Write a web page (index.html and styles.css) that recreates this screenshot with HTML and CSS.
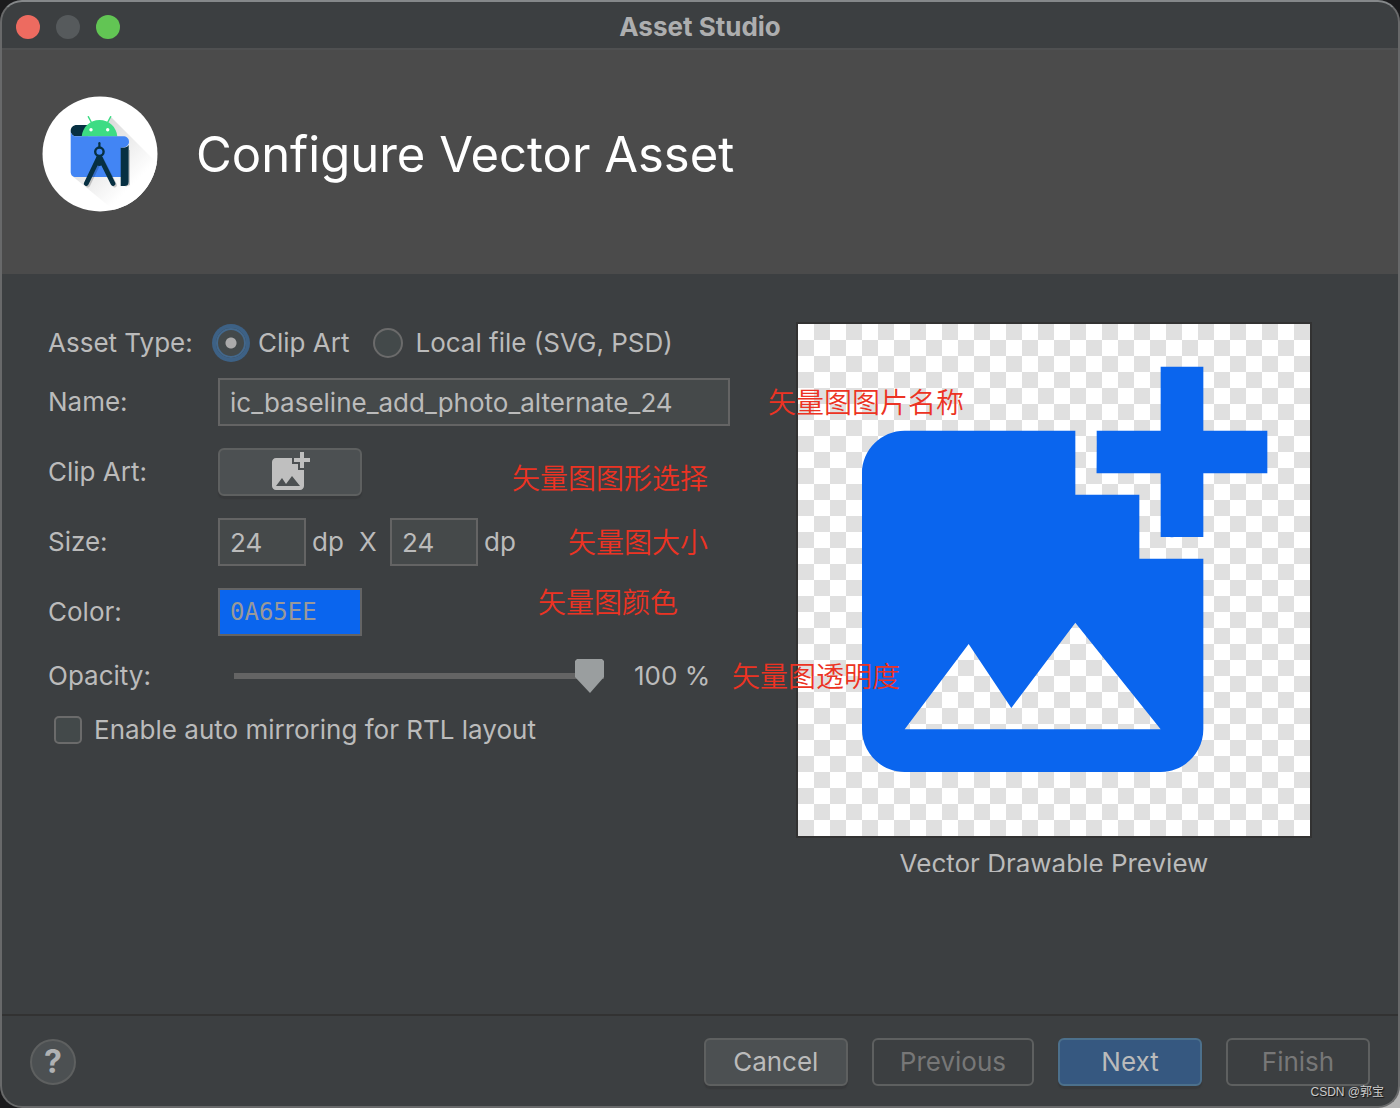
FILE: index.html
```html
<!DOCTYPE html>
<html lang="en">
<head>
  <meta charset="UTF-8" />
  <title>Asset Studio</title>
  <link rel="stylesheet" href="styles.css">
</head>
<body>
<div class="window">
  <div class="titlebar">
    <div class="lights">
      <span class="light close"></span>
      <span class="light minimize"></span>
      <span class="light zoom"></span>
    </div>
    <div class="window-title">Asset Studio</div>
  </div>

  <header class="header">
    <svg class="logo" viewBox="0 0 116 116" aria-hidden="true">
      <defs>
        <clipPath id="disc"><circle cx="58" cy="58" r="57.5"/></clipPath>
        <linearGradient id="shade" gradientUnits="userSpaceOnUse" x1="46" y1="46" x2="90" y2="90">
          <stop offset="0" stop-color="#dcdcdc"/>
          <stop offset="1" stop-color="#fff"/>
        </linearGradient>
      </defs>
      <circle cx="58" cy="58" r="57.5" fill="#fff"/>
      <path d="M69 21l60 60-44 44-56-46z" fill="url(#shade)" clip-path="url(#disc)"/>
      <path d="M46 29H35c-4 0-6.300 2.500-6.300 5.700 0 3.500 2.300 5.600 5.600 5.600H46z" fill="#073042"/>
      <path d="M39.700 40.500C40.500 31 48 24 57.500 24s17 7 17.800 16.500z" fill="#3ddc84"/>
      <path d="M46.300 20.700l3.200 6M68.700 20.700l-3.200 6" stroke="#3ddc84" stroke-width="1.400" stroke-linecap="round"/>
      <circle cx="49" cy="33.700" r="1.700" fill="#fff"/>
      <circle cx="65.700" cy="33.700" r="1.700" fill="#fff"/>
      <path d="M87 54v33l-4 4 5-2V54z" fill="#000" opacity=".2"/>
      <path d="M28.700 34.500v41.500c0 3 2.300 5 5 5H79V51.700c5.500 0 8-2.700 8-6 0-3.500-2.500-5.400-6-5.400H34.300c-3.300 0-5.600-2.300-5.600-5.800z" fill="#4285f4"/>
      <path d="M78.700 51.700h2.300c2.500 0 4.700-1 5.700-2.700v37c0 2.500-1.500 4-4 4h-4z" fill="#073042"/>
      <g transform="translate(1.500 1.500)" stroke="#000" stroke-width="4.800" stroke-linecap="round" opacity=".18">
        <path d="M56.500 62L44.300 87.500M58 62l13 25.500"/>
      </g>
      <g stroke="#073042" fill="none" stroke-linecap="round">
        <path d="M57.400 47.200v4" stroke-width="2.200"/>
        <circle cx="57.400" cy="55.700" r="4.200" stroke-width="2.400"/>
        <path d="M56.500 62L44.300 87.500M58.300 62L71 87.500" stroke-width="4.800"/>
        <path d="M57.400 62v5" stroke-width="6"/>
      </g>
    </svg>
    <h1>Configure Vector Asset</h1>
  </header>

  <main class="content">
    <form class="form" id="asset-form">
      <div class="row type-row">
        <span class="label">Asset Type:</span>
        <div class="radios">
          <label><input type="radio" name="type" checked>Clip Art</label>
          <label><input type="radio" name="type">Local file (SVG, PSD)</label>
        </div>
      </div>
      <div class="row">
        <label class="label" for="name">Name:</label>
        <input class="field name" type="text" id="name" value="ic_baseline_add_photo_alternate_24">
        <span class="note note-name">矢量图图片名称</span>
      </div>
      <div class="row">
        <label class="label" for="clip">Clip Art:</label>
        <button class="btn clip" type="button" id="clip" aria-label="Choose clip art">
          <svg viewBox="0 0 24 24"><path d="M19 7v2.990s-1.990.010-2 0V7h-3s.010-1.990 0-2h3V2h2v3h3v2h-3zm-3 4V8h-3V5H5c-1.100 0-2 .900-2 2v12c0 1.100.900 2 2 2h12c1.100 0 2-.900 2-2v-8h-3zM5 19l3-4 2 3 3-4 4 5H5z"/></svg>
        </button>
        <span class="note note-clip">矢量图图形选择</span>
      </div>
      <div class="row">
        <label class="label" for="width">Size:</label>
        <input class="field size" type="text" id="width" value="24">
        <span class="unit">dp</span>
        <label class="times" for="height">X</label>
        <input class="field size" type="text" id="height" value="24">
        <span class="unit">dp</span>
        <span class="note note-size">矢量图大小</span>
      </div>
      <div class="row">
        <label class="label" for="color">Color:</label>
        <input class="field color" type="text" id="color" value="0A65EE">
        <span class="note note-color">矢量图颜色</span>
      </div>
      <div class="row opacity-row">
        <label class="label" for="opacity">Opacity:</label>
        <input class="slider" type="range" id="opacity" min="0" max="100" value="100">
        <output for="opacity">100 %</output>
        <span class="note note-opacity">矢量图透明度</span>
      </div>
      <label class="mirror"><input type="checkbox">Enable auto mirroring for RTL layout</label>
    </form>

    <figure class="preview">
      <div class="checker">
        <svg viewBox="0 0 24 24"><path d="M19 7v2.990s-1.990.010-2 0V7h-3s.010-1.990 0-2h3V2h2v3h3v2h-3zm-3 4V8h-3V5H5c-1.100 0-2 .900-2 2v12c0 1.100.900 2 2 2h12c1.100 0 2-.900 2-2v-8h-3zM5 19l3-4 2 3 3-4 4 5H5z"/></svg>
      </div>
      <figcaption>Vector Drawable Preview</figcaption>
    </figure>
  </main>

  <footer class="footer">
    <button class="help" type="button">?</button>
    <div class="actions">
      <button class="btn" type="button">Cancel</button>
      <button class="btn previous" type="button" disabled>Previous</button>
      <button class="btn primary" type="submit" form="asset-form">Next</button>
      <button class="btn" type="button" disabled>Finish</button>
    </div>
  </footer>
  <div class="watermark">CSDN @郭宝</div>
</div>
</body>
</html>
```
FILE: styles.css
```css
* {
  box-sizing: border-box;
}
body {
  margin: 0;
  background: linear-gradient(135deg, #1b1b1d 98%, #b4b4b4 99%);
  color: #bbb;
  font-family: Inter, "Noto Sans CJK SC", sans-serif;
  font-size: 26px;
  line-height: 32px;
}
input, button {
  font: inherit;
  color: inherit;
  margin: 0;
}
.window {
  position: relative;
  display: flex;
  flex-direction: column;
  min-height: 100vh;
  border: 2px solid #68696a;
  border-top-color: #85888a;
  border-radius: 22px;
  background: #3c3f41;
  overflow: hidden;
}

/* title bar */
.titlebar {
  display: grid;
  grid-template-columns: 1fr auto 1fr;
  align-items: center;
  height: 48px;
  padding: 4px 14px 0;
  border-bottom: 2px solid #4f5051;
}
.lights {
  display: flex;
  gap: 16px;
}
.light {
  width: 24px;
  height: 24px;
  border-radius: 50%;
}
.close { background: #ed6b60; }
.minimize { background: #565a5c; }
.zoom { background: #62c554; }
.window-title {
  font-weight: bold;
  color: #adaeaf;
}

/* header */
.header {
  display: flex;
  align-items: flex-start;
  gap: 38px;
  height: 224px;
  padding: 46px 40px 0;
  background: #4b4b4b;
}
.logo {
  width: 116px;
  height: 116px;
}
h1 {
  margin: 0;
  font-size: 49px;
  font-weight: normal;
  line-height: 118px;
  color: #fff;
}

/* form */
.content {
  flex: 1;
  display: flex;
  justify-content: space-between;
  align-items: flex-start;
  padding: 48px 86px 48px 46px;
}
.row {
  position: relative;
  display: flex;
  align-items: center;
  height: 48px;
  margin-bottom: 22px;
}
.type-row {
  height: 42px;
  margin-bottom: 14px;
}
.type-row .label {
  width: 168px;
}
.opacity-row {
  height: 36px;
}
.label {
  width: 170px;
}
.radios {
  display: flex;
  gap: 24px;
}
.radios label, .mirror {
  display: flex;
  align-items: center;
  gap: 12px;
}
input[type="radio"], input[type="checkbox"] {
  appearance: none;
  width: 30px;
  height: 30px;
  border: 2px solid #6b6b6b;
  border-radius: 50%;
  background: #43494a;
}
input[type="radio"]:checked {
  border-color: #43688c;
  background: radial-gradient(circle, #ababab 5px, #43494a 6px);
  box-shadow: 0 0 0 4px #3d6185;
}
.mirror {
  height: 28px;
  padding-left: 6px;
}
input[type="checkbox"] {
  width: 28px;
  height: 28px;
  border-radius: 5px;
}
.field {
  height: 48px;
  padding: 0 10px;
  border: 2px solid #646464;
  border-radius: 0;
  background: #45494a;
}
.name { width: 512px; }
.size { width: 88px; }
.unit {
  width: 32px;
  margin-left: 6px;
}
.times {
  width: 18px;
  margin: 0 13px 0 15px;
}
.color {
  width: 144px;
  background: #0a65ee;
  color: #999;
  font-family: "DejaVu Sans Mono", monospace;
  font-size: 24px;
}
.slider {
  appearance: none;
  width: 370px;
  height: 34px;
  margin: 0 30px 0 16px;
  background: linear-gradient(#646464, #646464) center / 100% 6px no-repeat;
}
.slider::-webkit-slider-thumb {
  appearance: none;
  width: 29px;
  height: 34px;
  background: #9a9e9f;
  clip-path: polygon(0 2px, 2px 0, 27px 0, 29px 2px, 29px 18px, 15px 34px, 0 18px);
}

/* red notes laid over the dialog */
.note {
  position: absolute;
  z-index: 1;
  padding-bottom: 2px;
  color: #ec3323;
  font-family: "Noto Sans CJK SC", sans-serif;
  font-size: 28px;
  font-weight: 350;
  white-space: nowrap;
}
.note-name { left: 720px; }
.note-clip { left: 464px; top: 13px; }
.note-size { left: 520px; }
.note-color { left: 490px; top: -3px; }
.note-opacity { left: 684px; }

/* buttons */
.btn {
  min-width: 144px;
  height: 48px;
  padding: 0 26px;
  border: 2px solid #5e6060;
  border-radius: 6px;
  background: #4c5052;
  box-shadow: 0 3px 1px #37393b;
}
.btn:disabled {
  background: none;
  color: #777;
  box-shadow: none;
}
.primary {
  background: #365880;
  border-color: #4c708c;
}
.clip {
  display: flex;
  align-items: center;
  justify-content: center;
}
.clip svg {
  width: 48px;
  height: 48px;
  fill: #bfbfbf;
}

/* preview */
.preview {
  margin: 0;
}
.checker {
  border: 2px solid #323232;
  background: repeating-conic-gradient(#e0e0e0 0 25%, #fff 0 50%) 0 0 / 32px 32px;
}
.checker svg {
  display: block;
  width: 512px;
  height: 512px;
  fill: #0a65ee;
}
figcaption {
  height: 24px;
  margin-top: 10px;
  overflow: hidden;
  text-align: center;
}

/* footer */
.footer {
  display: flex;
  align-items: center;
  justify-content: space-between;
  height: 92px;
  padding: 2px 28px 0;
  border-top: 2px solid #323232;
}
.help {
  width: 46px;
  height: 46px;
  padding: 0;
  border: 2px solid #5e6060;
  border-radius: 50%;
  background: #4c5052;
  color: #afb1b3;
  font-size: 32px;
  font-weight: bold;
}
.actions {
  display: flex;
  gap: 24px;
}
.watermark {
  position: absolute;
  right: 14px;
  bottom: 4px;
  color: #ccc;
  font-family: "Liberation Sans", "Noto Sans CJK SC", sans-serif;
  font-size: 12px;
  line-height: 20px;
  text-shadow: 1px 1px 1px #111;
}
```
